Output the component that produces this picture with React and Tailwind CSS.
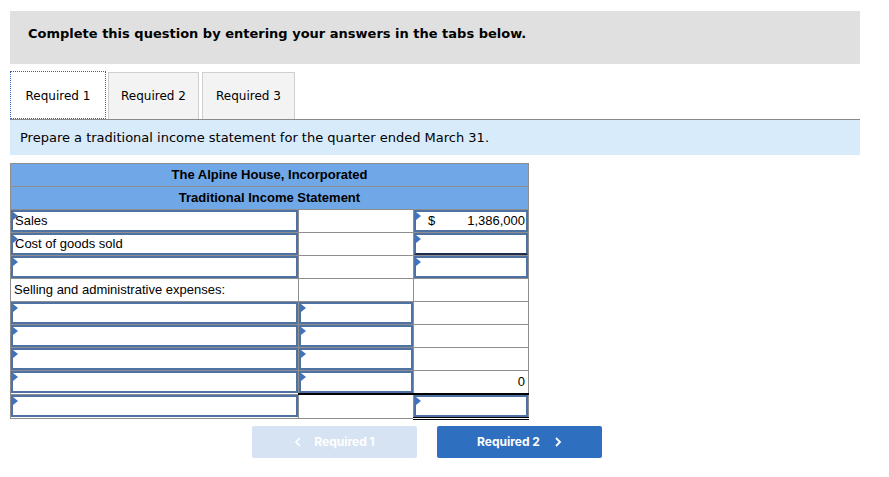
import React from 'react';

function Flag() {
  return (
    <span className="absolute left-0 top-0 w-0 h-0 border-y-[4px] border-y-transparent border-l-[5px] border-l-[#3d74c2]" />
  );
}

function Cell({ input, text, right, className = '', inner = '' }) {
  return (
    <td className={`h-[22px] p-0 border border-[#8e8e8e] align-middle ${className}`}>
      {input ? (
        <div className={`relative h-[22px] border-2 border-[#4f72a4] bg-white flex items-center px-[2px] ${inner}`}>
          <Flag />
          {text}
        </div>
      ) : (
        <div className={`h-[22px] flex items-center px-[3px] ${right ? 'justify-end' : ''}`}>{text}</div>
      )}
    </td>
  );
}

export default function App() {
  return (
    <div className="w-[889px] h-[477px] bg-white pt-[11px] px-[10px] relative" style={{ fontFamily: 'Verdana, "DejaVu Sans", sans-serif' }}>
      <div className="w-[850px] h-[53px] bg-[#e0e0e0] flex items-center pl-[18px]">
        <p className="text-[13px] font-bold text-black -mt-[8px]">Complete this question by entering your answers in the tabs below.</p>
      </div>

      <div className="flex items-end mt-[7px] w-[850px] border-b border-[#8a8a8a] h-[49px]">
        <div className="w-[96px] h-[48px] bg-white border border-dotted border-[#2f5fb0] flex items-center justify-center text-[12px] text-black pt-[2px]">Required 1</div>
        <div className="ml-[2px] w-[91px] h-[47px] bg-[#f3f3f3] border border-[#cfcfcf] border-b-0 flex items-center justify-center text-[12px] text-black">Required 2</div>
        <div className="ml-[3px] w-[93px] h-[47px] bg-[#f3f3f3] border border-[#cfcfcf] border-b-0 flex items-center justify-center text-[12px] text-black">Required 3</div>
      </div>

      <div className="w-[850px] h-[35px] bg-[#d8ebfa] flex items-center pl-[10px]">
        <p className="text-[13px] text-black">Prepare a traditional income statement for the quarter ended March 31.</p>
      </div>

      <table className="mt-[8px] border-collapse text-[13px] text-black" style={{ fontFamily: '"Liberation Sans", Arial, sans-serif' }}>
        <colgroup>
          <col className="w-[288px]" />
          <col className="w-[115px]" />
          <col className="w-[115px]" />
        </colgroup>
        <tbody>
          <tr>
            <td colSpan={3} className="h-[23px] p-0 border border-[#8e8e8e] bg-[#70a7e6] text-center font-bold">The Alpine House, Incorporated</td>
          </tr>
          <tr>
            <td colSpan={3} className="h-[23px] p-0 border border-[#8e8e8e] bg-[#70a7e6] text-center font-bold">Traditional Income Statement</td>
          </tr>
          <tr>
            <Cell input text="Sales" />
            <Cell />
            <Cell input inner="justify-between pl-[12px] pr-[1px]" text={<><span>$</span><span>1,386,000</span></>} />
          </tr>
          <tr>
            <Cell input text="Cost of goods sold" />
            <Cell />
            <Cell input inner="border-b-[#1c2c4a]" />
          </tr>
          <tr>
            <Cell input />
            <Cell />
            <Cell input />
          </tr>
          <tr>
            <Cell text="Selling and administrative expenses:" />
            <Cell />
            <Cell />
          </tr>
          <tr>
            <Cell input />
            <Cell input />
            <Cell />
          </tr>
          <tr>
            <Cell input />
            <Cell input />
            <Cell />
          </tr>
          <tr>
            <Cell input />
            <Cell input />
            <Cell />
          </tr>
          <tr>
            <Cell input />
            <Cell input />
            <Cell right text="0" />
          </tr>
          <tr>
            <Cell input />
            <Cell className="border-t-2 border-t-black" />
            <Cell input className="border-t-2 border-t-black border-b-[3px] border-b-black border-double" />
          </tr>
        </tbody>
      </table>

      <div className="flex mt-[6px] ml-[242px] gap-[20px]" style={{ fontFamily: 'Inter, sans-serif' }}>
        <div className="w-[165px] h-[32px] rounded-[2px] bg-[#d6e3f2] flex items-center justify-center gap-[12px] text-white text-[12px] font-bold">
          <svg width="8" height="10" viewBox="0 0 8 10" fill="none" stroke="white" strokeWidth="1.6"><path d="M6 1 L2 5 L6 9" /></svg>
          <span>Required 1</span>
        </div>
        <div className="w-[165px] h-[32px] rounded-[2px] bg-[#2f6fbf] flex items-center justify-center gap-[14px] text-white text-[12px] font-bold">
          <span>Required 2</span>
          <svg width="8" height="10" viewBox="0 0 8 10" fill="none" stroke="white" strokeWidth="1.8"><path d="M2 1 L6 5 L2 9" /></svg>
        </div>
      </div>
    </div>
  );
}
